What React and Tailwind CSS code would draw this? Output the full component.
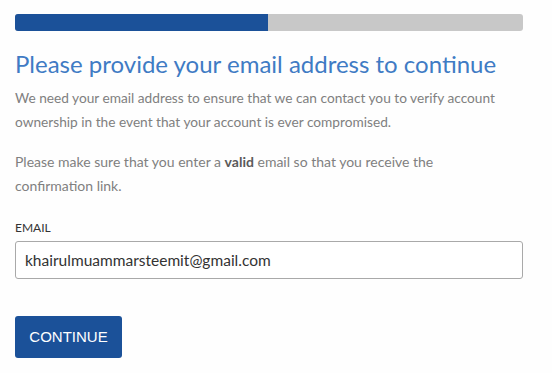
import { useState } from 'react'

export default function App() {
    const [email, setEmail] = useState('khairulmuammarsteemit@gmail.com')

    return (
        <div className="min-h-[373px] bg-[#fefefe] font-['Lato','Liberation_Sans',sans-serif]">
            <div className="w-[538px] pt-[14px] pl-[15px]">
                {/* progress */}
                <div className="w-[508px] h-[17px] rounded-[3px] bg-[#c8c8c8] overflow-hidden">
                    <div className="w-[253px] h-full bg-[#1b5199]" />
                </div>

                <h1 className="mt-[18px] text-[24px] leading-[30px] text-[#3f7bc4] whitespace-nowrap">
                    Please provide your email address to continue
                </h1>

                <p className="mt-[7px] w-[490px] text-[13.7px] leading-[24px] text-[#808080]">
                    We need your email address to ensure that we can contact you to verify account ownership in the event that your account is ever compromised.
                </p>
                <p className="mt-[16px] w-[475px] text-[14px] leading-[24px] text-[#808080]">
                    Please make sure that you enter a <b className="font-bold text-[#5a5a5a]">valid</b> email so that you receive the confirmation link.
                </p>

                <label className="block mt-[22px] text-[12px] leading-[16px] text-[#333] uppercase">
                    Email
                </label>
                <input
                    value={email}
                    onChange={e => setEmail(e.target.value)}
                    className="mt-[5px] block w-[508px] h-[38px] px-[9px] rounded-[3px] border border-[#a9a9a9] bg-white text-[15.5px] text-[#333] outline-none"
                />

                <button className="mt-[37px] w-[107px] h-[42px] rounded-[3px] bg-[#1b5199] text-white text-[15px] font-['Liberation_Sans',Arial,sans-serif]">
                    CONTINUE
                </button>
            </div>
        </div>
    )
}
